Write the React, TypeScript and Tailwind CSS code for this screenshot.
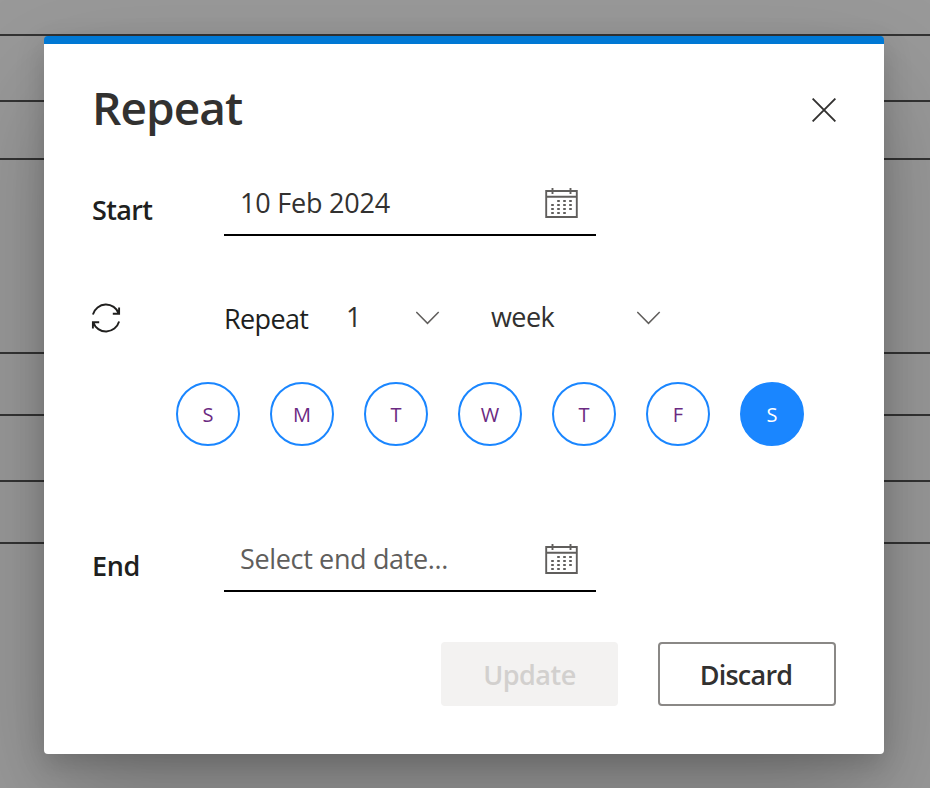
import { useState } from "react";
import clsx from "clsx";

const DAYS = ["S", "M", "T", "W", "T", "F", "S"];

type DateFieldProps = {
  value: string;
  placeholder?: boolean;
};

function CalendarIcon() {
  return (
    <svg width="34" height="32" viewBox="0 0 34 32" fill="none" stroke="#605e5c" strokeWidth="1.9">
      <path d="M1.2 4H31.8V30H1.2Z M1.2 9.8H31.8 M7.5 1V7 M25.5 1V7" />
      <g strokeWidth="2.2" strokeDasharray="2.6 3.4">
        <path d="M12.2 14H26.9" />
        <path d="M6.2 18H26.9" />
        <path d="M6.2 22H26.9" />
        <path d="M6.2 26H20.9" />
      </g>
    </svg>
  );
}

function RepeatIcon() {
  return (
    <svg width="32" height="32" viewBox="0 0 32 32" fill="none" stroke="#201f1e" strokeWidth="1.9">
      <path d="M2.9 12.4A13.6 13.6 0 0 1 28.8 11.6 M29.1 5.6V11.8H22.8" />
      <path d="M29.1 19.6A13.6 13.6 0 0 1 3.2 20.4 M2.9 26.4V20.2H9.2" />
    </svg>
  );
}

function ChevronIcon() {
  return (
    <svg width="24" height="14" viewBox="0 0 24 14" fill="none" stroke="#605e5c" strokeWidth="1.5">
      <path d="M0.3 1L11.5 12.4L22.7 1" />
    </svg>
  );
}

function CloseIcon() {
  return (
    <svg width="24" height="24" viewBox="0 0 24 24" fill="none" stroke="#323130" strokeWidth="1.9">
      <path d="M0.6 0.6L23.4 23.4M23.4 0.6L0.6 23.4" />
    </svg>
  );
}

function DateField({ value, placeholder }: DateFieldProps) {
  return (
    <div className="flex h-16 w-[372px] items-center justify-between border-b-2 border-black pr-[17px] pl-4">
      <span
        className={clsx(
          placeholder ? "tracking-[-0.35px] text-[#605e5c]" : "tracking-[-0.2px] text-[#323130]"
        )}
      >
        {value}
      </span>
      <CalendarIcon />
    </div>
  );
}

/* Calendar rows dimmed behind the dialog. */
function CalendarGrid() {
  return (
    <div className="h-full bg-[#999999]">
      <div className="h-9 border-b-2 border-[#333333]" />
      <div className="h-[66px] border-b-2 border-[#333333]" />
      <div className="h-[58px] border-b-2 border-[#333333]" />
      <div className="h-[194px] border-b-2 border-[#333333]" />
      <div className="h-[62px] border-b-2 border-[#333333]" />
      <div className="h-[66px] border-b-2 border-[#333333]" />
      <div className="h-[62px] border-b-2 border-[#333333]" />
    </div>
  );
}

export default function App() {
  const [selected, setSelected] = useState<number[]>([6]);

  const toggleDay = (day: number) => {
    setSelected((prev) =>
      prev.includes(day) ? prev.filter((d) => d !== day) : [...prev, day]
    );
  };

  return (
    <div className="h-[788px] w-[930px] overflow-hidden font-['Open_Sans','Noto_Sans',sans-serif] text-[27px] leading-10">
      <CalendarGrid />

      <div className="absolute inset-0 flex items-start overflow-hidden pt-9 pl-11">
        <div
          role="dialog"
          aria-label="Repeat"
          className="flex h-[718px] w-[840px] flex-col overflow-hidden rounded-[4px] border-t-8 border-[#0078d4] bg-white px-12 shadow-[0_51px_115px_rgba(0,0,0,0.22),0_10px_29px_rgba(0,0,0,0.18)]"
        >
          <header className="mt-[31px] flex h-16 items-center justify-between">
            <h1 className="text-[46px] font-semibold tracking-[-0.95px] text-[#323130]">Repeat</h1>
            <button type="button" aria-label="Close" className="pt-1.5">
              <CloseIcon />
            </button>
          </header>

          <div className="mt-[33px] flex h-16 items-center">
            <span className="w-33 pt-3 font-semibold tracking-[-0.65px] text-[#201f1e]">Start</span>
            <DateField value="10 Feb 2024" />
          </div>

          <div className="mt-[62px] flex h-10 items-center">
            <span className="w-33 -translate-x-0.5">
              <RepeatIcon />
            </span>
            <span className="w-[122px] pt-0.5 tracking-[-0.65px] text-[#201f1e]">Repeat</span>
            <button type="button" className="flex w-[94px] items-center justify-between text-[#323130]">
              <span className="pb-0.5">1</span>
              <ChevronIcon />
            </button>
            <button type="button" className="ml-[51px] flex w-[170px] items-center justify-between tracking-[-0.6px] text-[#323130]">
              <span className="pb-0.5">week</span>
              <ChevronIcon />
            </button>
          </div>

          <div className="mt-11 ml-21 flex gap-[30px]">
            {DAYS.map((day, i) => (
              <button
                key={i}
                type="button"
                onClick={() => toggleDay(i)}
                className={clsx(
                  "flex size-16 shrink-0 items-center justify-center rounded-full border-2 border-[#1a86ff] pt-0.5 text-[20px]",
                  selected.includes(i) ? "bg-[#1a86ff] text-white" : "bg-white text-[#6b2a82]"
                )}
              >
                {day}
              </button>
            ))}
          </div>

          <div className="mt-[82px] flex h-16 items-center">
            <span className="w-33 pt-3 font-semibold tracking-[-0.4px] text-[#201f1e]">End</span>
            <DateField value="Select end date..." placeholder />
          </div>

          <footer className="mt-[50px] flex justify-end gap-10 font-semibold">
            <button
              type="button"
              disabled
              className="h-16 w-[177px] rounded-[4px] bg-[#f3f2f1] pt-0.5 tracking-[-0.5px] text-[#d2d0ce]"
            >
              Update
            </button>
            <button
              type="button"
              className="h-16 w-[178px] rounded-[4px] border-2 border-[#8a8886] bg-white pt-0.5 pr-0.5 tracking-[-0.75px] text-[#323130]"
            >
              Discard
            </button>
          </footer>
        </div>
      </div>
    </div>
  );
}
